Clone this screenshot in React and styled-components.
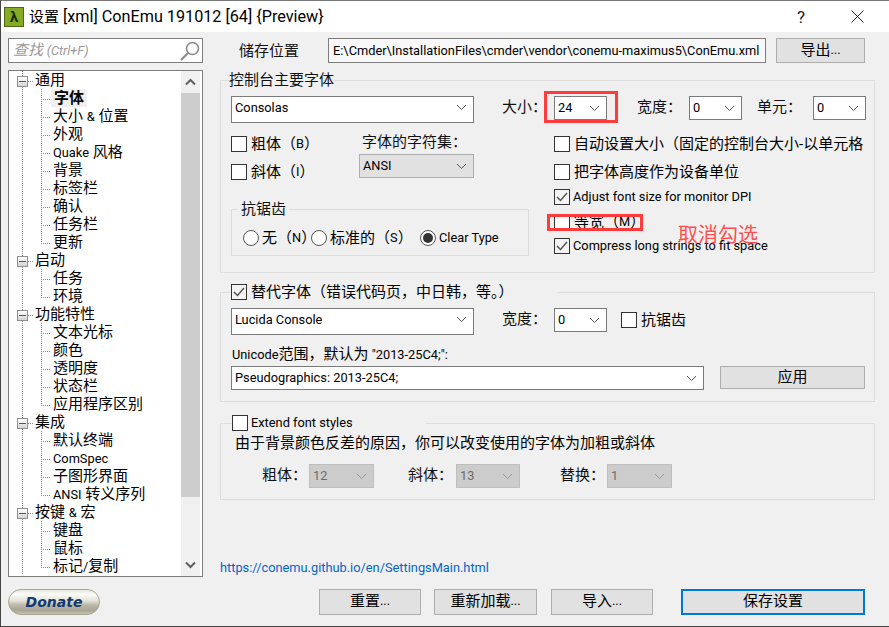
import React from 'react';
import styled, { createGlobalStyle } from 'styled-components';

const GlobalStyle = createGlobalStyle`
    html, body {
        margin: 0;
        padding: 0;
        background: #f0f0f0;
    }
    body {
        font-family: Roboto, "Noto Sans CJK SC", sans-serif;
        font-size: 15px;
        line-height: 18px;
        color: #111;
    }
    * {
        box-sizing: border-box;
    }
`;

const Page = styled.div`
    position: relative;
    width: 889px;
    height: 627px;
    overflow: hidden;
`;

const Window = styled.div`
    display: flex;
    flex-direction: column;
    height: 100%;
    background: #f0f0f0;
    border-left: 1px solid #444;
    border-bottom: 1px solid #444;
    border-top: 1px solid #777;
`;

const TitleBar = styled.div`
    display: flex;
    align-items: center;
    height: 31px;
    flex-shrink: 0;
    background: #fff;
    padding-left: 3px;
`;

const AppIcon = styled.div`
    display: flex;
    align-items: center;
    justify-content: center;
    width: 20px;
    height: 20px;
    background: #84ab22;
    border: 1px solid #4d6a12;
    color: #1c2a08;
    font-size: 15px;
    font-weight: 700;
`;

const TitleText = styled.div`
    margin-left: 5px;
    font-size: 16.2px;
    white-space: nowrap;
    color: #000;

    b {
        font-weight: 400;
        font-size: 15px;
    }
`;

const TitleButtons = styled.div`
    display: flex;
    align-items: center;
    margin-left: auto;
    padding-right: 25px;
    gap: 46px;
`;

const HelpMark = styled.span`
    font-size: 17px;
    color: #222;
`;

const Body = styled.div`
    flex: 1;
    display: grid;
    grid-template-columns: 195px 655px;
    column-gap: 17px;
    padding: 6px 0 11px 7px;
    min-height: 0;
`;

const Sidebar = styled.div`
    display: flex;
    flex-direction: column;
`;

const Search = styled.div`
    display: flex;
    align-items: center;
    justify-content: space-between;
    height: 25px;
    padding: 0 1px 0 4px;
    background: #fff;
    border: 1px solid #7d7d7d;
    color: #9a9a9a;
    font-style: italic;
    font-size: 15px;
`;

const Small = styled.span`
    font-size: 12.8px;
`;

const Tree = styled.div`
    display: flex;
    height: 507px;
    margin-top: 7px;
    background: #fff;
    border: 1px solid #7d7d7d;
    overflow: hidden;
`;

const TreeList = styled.div`
    flex: 1;
    overflow: hidden;
`;

const dotsV = 'repeating-linear-gradient(to bottom, #8a8a8a 0 1px, transparent 1px 2px)';
const dotsH = 'repeating-linear-gradient(to right, #8a8a8a 0 1px, transparent 1px 2px)';

const RootRow = styled.div`
    display: flex;
    align-items: center;
    height: 18px;
    padding-left: 8px;
    background-image: ${dotsV}, ${dotsH};
    background-repeat: no-repeat;
    background-size: 1px 18px, 6px 1px;
    background-position: 13px 0, 19px 10px;
`;

const Expander = styled.span`
    display: flex;
    align-items: center;
    justify-content: center;
    width: 11px;
    height: 11px;
    margin-top: 3px;
    background: linear-gradient(#fff, #d4d4d4);
    border: 1px solid #8f8f8f;

    &::before {
        content: "";
        width: 7px;
        height: 1px;
        background: #3a55a8;
    }
`;

const RootLabel = styled.span`
    margin-left: 7px;
    height: 18px;
    white-space: nowrap;
    color: #000;
`;

const ChildRow = styled.div`
    display: flex;
    align-items: center;
    height: 18px;
    padding-left: 42px;
    background-image: ${dotsV}, ${dotsV}, ${dotsH};
    background-repeat: no-repeat;
    background-size: 1px 18px, 1px ${p => (p.$last ? '10px' : '18px')}, 9px 1px;
    background-position: 13px 0, 32px 0, 32px 10px;
`;

const ChildLabel = styled.span`
    padding: 0 ${p => (p.$active ? '3px' : '2px')};
    height: 18px;
    white-space: nowrap;
    color: #000;
    font-weight: ${p => (p.$active ? 700 : 400)};
    background: ${p => (p.$active ? '#f0f0f0' : 'transparent')};
`;

const Scrollbar = styled.div`
    display: flex;
    flex-direction: column;
    width: 19px;
    margin-right: 2px;
    background: #f0f0f0;
`;

const ScrollArrow = styled.div`
    display: flex;
    align-items: center;
    justify-content: center;
    height: 22px;
    flex-shrink: 0;
`;

const ScrollThumb = styled.div`
    height: 404px;
    flex-shrink: 0;
    background: #cdcdcd;
`;

const ScrollRest = styled.div`
    flex: 1;
`;

const Donate = styled.div`
    display: flex;
    align-items: center;
    justify-content: center;
    width: 92px;
    height: 26px;
    margin-top: 12px;
    border: 1px solid #a9a593;
    border-radius: 13px;
    background: linear-gradient(#e9e8e2 0%, #fbfbf8 18%, #e3e2da 45%, #bdb9a8 62%, #a9a594 85%, #c6c3b6 100%);
    color: #123a70;
    font-family: "DejaVu Sans", sans-serif;
    font-style: italic;
    font-weight: 700;
    font-size: 14px;
`;

const Main = styled.div`
    display: flex;
    flex-direction: column;
    min-height: 0;
`;

const StorageRow = styled.div`
    display: flex;
    align-items: center;
    height: 25px;
    padding-left: 19px;
`;

const StorageLabel = styled.span`
    width: 89px;
`;

const PathField = styled.div`
    display: flex;
    align-items: center;
    width: 438px;
    height: 25px;
    padding-left: 4px;
    background: #f8f8f8;
    border: 1px solid #7d7d7d;
    font-size: 12.8px;
    white-space: nowrap;
    overflow: hidden;
    color: #000;
`;

const Button = styled.div`
    display: flex;
    align-items: center;
    justify-content: center;
    width: ${p => p.$w}px;
    height: ${p => p.$h || 26}px;
    margin-left: ${p => p.$ml || 0}px;
    padding-bottom: 2px;
    background: #e1e1e1;
    border: ${p => (p.$primary ? '2px solid #0078d7' : '1px solid #adadad')};
    color: #000;
`;

const Group = styled.fieldset`
    margin: ${p => p.$mt}px 0 0;
    padding: ${p => p.$pt ?? 7}px 0 0 ${p => p.$pl || 10}px;
    height: ${p => p.$h}px;
    width: ${p => (p.$w ? `${p.$w}px` : 'auto')};
    min-width: 0;
    border: 1px solid #dcdcdc;
`;

const Legend = styled.legend`
    display: flex;
    align-items: center;
    height: 18px;
    width: ${p => (p.$w ? `${p.$w}px` : 'auto')};
    margin-left: ${p => p.$ml}px;
    padding: 0 ${p => p.$px || 0}px;
    white-space: nowrap;
`;

const Row = styled.div`
    display: flex;
    align-items: flex-start;
    margin-top: ${p => p.$mt || 0}px;
    padding-left: ${p => p.$pl || 0}px;
`;

const FieldLabel = styled.span`
    width: ${p => p.$w}px;
    margin-left: ${p => p.$ml || 0}px;
    line-height: 22px;
    white-space: nowrap;
`;

const ComboBox = styled.div`
    display: flex;
    align-items: center;
    justify-content: space-between;
    flex-shrink: 0;
    width: ${p => p.$w}px;
    height: ${p => p.$h || 24}px;
    margin-left: ${p => p.$ml || 0}px;
    padding: ${p => (p.$top ? '0 6px 4px 3px' : '0 6px 0 3px')};
    font-size: 12.8px;
    white-space: nowrap;
    color: ${p => (p.$off ? '#6c6c6c' : '#000')};
    background: ${p => (p.$off ? '#cccccc' : p.$grey ? '#e1e1e1' : '#fff')};
    border: 1px solid ${p => (p.$off ? '#bfbfbf' : p.$grey ? '#adadad' : '#7a7a7a')};
`;

const Columns = styled.div`
    display: flex;
`;

const LeftColumn = styled.div`
    width: 323px;
    flex-shrink: 0;
`;

const RightColumn = styled.div`
    display: flex;
    flex-direction: column;
    padding-top: 13px;
`;

const StyleBlock = styled.div`
    display: flex;
    padding-top: 13px;
    height: 77px;
`;

const StyleChecks = styled.div`
    width: 128px;
`;

const CharsetBlock = styled.div`
    margin-top: -3px;
`;

const CharsetLabel = styled.div`
    padding-left: 3px;
    height: 21px;
`;

const CheckRow = styled.label`
    display: flex;
    align-items: center;
    height: 16px;
    margin-top: ${p => p.$mt || 0}px;
    margin-left: ${p => p.$ml || 0}px;
    white-space: nowrap;
    flex-shrink: 0;
    color: #000;
`;

const CheckBox = styled.span`
    display: flex;
    align-items: center;
    justify-content: center;
    width: 16px;
    height: 16px;
    flex-shrink: 0;
    margin-right: ${p => p.$mr || 4}px;
    background: ${p => (p.$checked ? '#f4f4f4' : '#fff')};
    border: 1px solid #333;
`;

const RadioRow = styled.div`
    display: flex;
    align-items: center;
    width: ${p => (p.$w ? `${p.$w}px` : 'auto')};
    white-space: nowrap;
    flex-shrink: 0;
    color: #000;
`;

const RadioDot = styled.span`
    display: flex;
    align-items: center;
    justify-content: center;
    width: 16px;
    height: 16px;
    margin-right: 3px;
    flex-shrink: 0;
    border: 1px solid #555;
    border-radius: 50%;
    background: #fff;

    &::before {
        content: "";
        display: ${p => (p.$on ? 'block' : 'none')};
        width: 10px;
        height: 10px;
        border-radius: 50%;
        background: #333;
    }
`;

const UnicodeLabel = styled.div`
    margin: 10px 0 3px 1px;
    height: 18px;
    font-size: 12.8px;
    color: #000;
    white-space: nowrap;

    b {
        font-weight: 400;
        font-size: 15px;
    }
`;

const Note = styled.div`
    margin: 2px 0 0 3px;
    height: 18px;
    white-space: nowrap;
    color: #000;
`;

const LinkText = styled.a`
    margin-top: auto;
    font-size: 12.8px;
    color: #0066cc;
    text-decoration: none;
    white-space: nowrap;
`;

const Footer = styled.div`
    display: flex;
    margin-top: 12px;
    padding-left: 99px;
`;

const Marker = styled.div`
    position: absolute;
    left: ${p => p.$x}px;
    top: ${p => p.$y}px;
    width: ${p => p.$w}px;
    height: ${p => p.$h}px;
    border: 3px solid #ff3b3b;
`;

const Annotation = styled.div`
    position: absolute;
    left: 678px;
    top: 222px;
    font-size: 20px;
    line-height: 26px;
    color: #ff4d4d;
    white-space: nowrap;
`;

const treeData = [
    { label: '通用', children: ['字体', '大小 & 位置', '外观', 'Quake 风格', '背景', '标签栏', '确认', '任务栏', '更新'] },
    { label: '启动', children: ['任务', '环境'] },
    { label: '功能特性', children: ['文本光标', '颜色', '透明度', '状态栏', '应用程序区别'] },
    { label: '集成', children: ['默认终端', 'ComSpec', '子图形界面', 'ANSI 转义序列'] },
    { label: '按键 & 宏', children: ['键盘', '鼠标', '标记/复制'] },
];

// latin runs are drawn smaller than the cjk ones, same as the bitmap font in the dialog
const mixed = (text) =>
    text.split(/([A-Za-z&/]+)/).map((part, i) =>
        /[A-Za-z&/]/.test(part) ? <Small key={i}>{part}</Small> : part
    );

const Chevron = ({ color = '#555' }) => (
    <svg width="11" height="7" viewBox="0 0 11 7" fill="none">
        <path d="M1 1l4.5 4.5L10 1" stroke={color} strokeWidth="1" />
    </svg>
);

const Combo = ({ value, ...rest }) => (
    <ComboBox {...rest}>
        <span>{value}</span>
        <Chevron color={rest.$off ? '#999' : '#555'} />
    </ComboBox>
);

const Tick = () => (
    <svg width="12" height="10" viewBox="0 0 12 10" fill="none">
        <path d="M1 5l3.5 3.5L11 1" stroke="#555" strokeWidth="1.5" />
    </svg>
);

const Check = ({ checked, children, mt, ml, mr }) => (
    <CheckRow $mt={mt} $ml={ml}>
        <CheckBox $checked={checked} $mr={mr}>{checked && <Tick />}</CheckBox>
        {children}
    </CheckRow>
);

const Radio = ({ on, w, children }) => (
    <RadioRow $w={w}>
        <RadioDot $on={on} />
        {children}
    </RadioRow>
);

const App = () => {
    return (
        <Page>
            <GlobalStyle />
            <Window>
                <TitleBar>
                    <AppIcon>λ</AppIcon>
                    <TitleText><b>设置</b> [xml] ConEmu 191012 [64] {'{Preview}'}</TitleText>
                    <TitleButtons>
                        <HelpMark>?</HelpMark>
                        <svg width="13" height="13" viewBox="0 0 13 13" fill="none">
                            <path d="M.5.5l12 12M12.5.5l-12 12" stroke="#222" strokeWidth="1" />
                        </svg>
                    </TitleButtons>
                </TitleBar>

                <Body>
                    <Sidebar>
                        <Search>
                            <span>查找 <Small>(Ctrl+F)</Small></span>
                            <svg width="22" height="22" viewBox="0 0 22 22" fill="none">
                                <circle cx="13.5" cy="8.5" r="6" stroke="#8a8a8a" strokeWidth="1.6" fill="#fbfbfb" />
                                <path d="M9 13l-7 7" stroke="#8a8a8a" strokeWidth="2.2" />
                            </svg>
                        </Search>

                        <Tree>
                            <TreeList>
                                {treeData.map((node) => (
                                    <div key={node.label}>
                                        <RootRow>
                                            <Expander />
                                            <RootLabel>{mixed(node.label)}</RootLabel>
                                        </RootRow>
                                        {node.children.map((child, i) => (
                                            <ChildRow key={child} $last={i === node.children.length - 1}>
                                                <ChildLabel $active={child === '字体'}>{mixed(child)}</ChildLabel>
                                            </ChildRow>
                                        ))}
                                    </div>
                                ))}
                            </TreeList>
                            <Scrollbar>
                                <ScrollArrow>
                                    <svg width="11" height="8" viewBox="0 0 11 8" fill="none">
                                        <path d="M1 6.5l4.5-4.5L10 6.5" stroke="#606060" strokeWidth="2" />
                                    </svg>
                                </ScrollArrow>
                                <ScrollThumb />
                                <ScrollRest />
                                <ScrollArrow>
                                    <svg width="11" height="8" viewBox="0 0 11 8" fill="none">
                                        <path d="M1 1.5L5.5 6 10 1.5" stroke="#606060" strokeWidth="2" />
                                    </svg>
                                </ScrollArrow>
                            </Scrollbar>
                        </Tree>

                        <Donate>Donate</Donate>
                    </Sidebar>

                    <Main>
                        <StorageRow>
                            <StorageLabel>储存位置</StorageLabel>
                            <PathField>E:\Cmder\InstallationFiles\cmder\vendor\conemu-maximus5\ConEmu.xml</PathField>
                            <Button $w={89} $h={25} $ml={10}>导出<Small>...</Small></Button>
                        </StorageRow>

                        <Group $mt={8} $h={202}>
                            <Legend $ml={-2}>控制台主要字体</Legend>
                            <Row>
                                <Combo value="Consolas" $w={243} $h={27} $top />
                                <FieldLabel $ml={28} $w={52}>大小：</FieldLabel>
                                <Combo value="24" $w={53} />
                                <FieldLabel $ml={30} $w={52}>宽度：</FieldLabel>
                                <Combo value="0" $w={53} />
                                <FieldLabel $ml={15} $w={56}>单元：</FieldLabel>
                                <Combo value="0" $w={53} />
                            </Row>
                            <Columns>
                                <LeftColumn>
                                    <StyleBlock>
                                        <StyleChecks>
                                            <Check>粗体（<Small>B</Small>）</Check>
                                            <Check mt={12}>斜体（<Small>I</Small>）</Check>
                                        </StyleChecks>
                                        <CharsetBlock>
                                            <CharsetLabel>字体的字符集：</CharsetLabel>
                                            <Combo value="ANSI" $w={115} $grey />
                                        </CharsetBlock>
                                    </StyleBlock>
                                    <Group $mt={0} $h={56} $pt={11} $pl={11} $w={298}>
                                        <Legend $ml={-5} $px={3}>抗锯齿</Legend>
                                        <Row>
                                            <Radio w={68}>无（<Small>N</Small>）</Radio>
                                            <Radio w={109}>标准的（<Small>S</Small>）</Radio>
                                            <Radio on><Small>Clear Type</Small></Radio>
                                        </Row>
                                    </Group>
                                </LeftColumn>
                                <RightColumn>
                                    <Check>自动设置大小（固定的控制台大小-以单元格</Check>
                                    <Check mt={12}>把字体高度作为设备单位</Check>
                                    <Check checked mt={9} mr={3}><Small>Adjust font size for monitor DPI</Small></Check>
                                    <Check mt={9}>等宽（<Small>M</Small>）</Check>
                                    <Check checked mt={8} mr={3}><Small>Compress long strings to fit space</Small></Check>
                                </RightColumn>
                            </Columns>
                        </Group>

                        <Group $mt={10} $h={119}>
                            <Legend $ml={0} $w={326}>
                                <Check checked>替代字体（错误代码页，中日韩，等。）</Check>
                            </Legend>
                            <Row>
                                <Combo value="Lucida Console" $w={243} $h={27} $top />
                                <FieldLabel $ml={28} $w={52}>宽度：</FieldLabel>
                                <Combo value="0" $w={53} />
                                <Check ml={14} mt={4}>抗锯齿</Check>
                            </Row>
                            <UnicodeLabel>Unicode<b>范围，默认为</b> "2013-25C4;":</UnicodeLabel>
                            <Row>
                                <Combo value="Pseudographics: 2013-25C4;" $w={473} />
                                <Button $w={145} $h={23} $ml={16}>应用</Button>
                            </Row>
                        </Group>

                        <Group $mt={12} $h={86} $pt={0} $pl={11}>
                            <Legend $ml={0} $w={194}>
                                <Check mr={3}><Small>Extend font styles</Small></Check>
                            </Legend>
                            <Note>由于背景颜色反差的原因，你可以改变使用的字体为加粗或斜体</Note>
                            <Row $mt={12} $pl={30}>
                                <FieldLabel $w={47}>粗体：</FieldLabel>
                                <Combo value="12" $w={65} $off />
                                <FieldLabel $ml={34} $w={48}>斜体：</FieldLabel>
                                <Combo value="13" $w={64} $off />
                                <FieldLabel $ml={40} $w={47}>替换：</FieldLabel>
                                <Combo value="1" $w={65} $off />
                            </Row>
                        </Group>

                        <LinkText href="#">https://conemu.github.io/en/SettingsMain.html</LinkText>

                        <Footer>
                            <Button $w={102}>重置<Small>...</Small></Button>
                            <Button $w={103} $ml={13}>重新加载<Small>...</Small></Button>
                            <Button $w={102} $ml={14}>导入<Small>...</Small></Button>
                            <Button $w={184} $ml={28} $primary>保存设置</Button>
                        </Footer>
                    </Main>
                </Body>
            </Window>

            <Marker $x={544} $y={91} $w={74} $h={32} />
            <Marker $x={547} $y={214} $w={96} $h={17} />
            <Annotation>取消勾选</Annotation>
        </Page>
    );
};

export default App;
